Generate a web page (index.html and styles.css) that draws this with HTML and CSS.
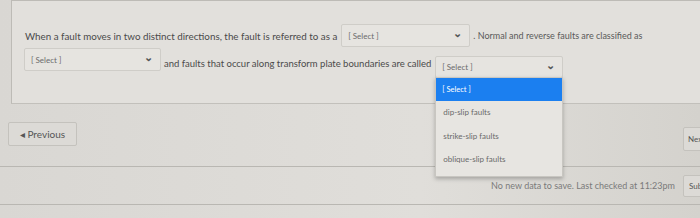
FILE: index.html
```html
<!DOCTYPE html>
<html lang="en">
<head>
    <meta charset="UTF-8">
    <title>Quiz Question</title>
    <link rel="stylesheet" href="styles.css">
</head>
<body>
    <div class="question">
        <div class="row row-one">
            <span>When a fault moves in two distinct directions, the fault is referred to as a</span>
            <div class="select sel-one"><span>[ Select ]</span><span class="caret">&#8964;</span></div>
            <span class="after">. Normal and reverse faults are classified as</span>
        </div>
        <div class="row row-two">
            <div class="select sel-two"><span>[ Select ]</span><span class="caret">&#8964;</span></div>
            <span class="mid">and faults that occur along transform plate boundaries are called</span>
            <div class="drop-wrap">
                <div class="select sel-three"><span>[ Select ]</span><span class="caret">&#8964;</span></div>
                <ul class="options">
                    <li class="active">[ Select ]</li>
                    <li>dip-slip faults</li>
                    <li>strike-slip faults</li>
                    <li>oblique-slip faults</li>
                </ul>
            </div>
        </div>
    </div>

    <div class="nav">
        <button class="btn btn-prev">&#9666; Previous</button>
        <button class="btn btn-next">Next</button>
    </div>

    <div class="footer">
        <span class="status">No new data to save. Last checked at 11:23pm</span>
        <button class="btn btn-submit">Submit</button>
    </div>
</body>
</html>
```

FILE: styles.css
```css
body {
    margin: 0;
    font-family: Lato, "Open Sans", sans-serif;
    font-size: 9.8px;
    color: #4a4a4a;
    background: linear-gradient(90deg, #d9d7d3, #e0deda 60%, #d4d2cd);
    height: 218px;
    overflow: hidden;
}
.question {
    margin-left: 11px;
    height: 104px;
    border-left: 1px solid #bdbbb6;
    border-top: 1px solid #bdbbb6;
    border-bottom: 1px solid #c2c0bb;
    background: #e2e0dc;
    box-sizing: border-box;
    padding: 23px 0 0 13px;
}
.row {
    display: flex;
    white-space: nowrap;
}
.row-one {
    align-items: center;
    height: 23px;
}
.row-one .select {
    margin-left: 4px;
}
.after {
    margin-left: 3px;
    font-size: 9px;
    color: #5a5a5a;
}
.row-two {
    margin-top: 1px;
    margin-left: -1px;
    align-items: flex-start;
}
.select {
    display: flex;
    justify-content: space-between;
    align-items: center;
    box-sizing: border-box;
    height: 23px;
    padding: 0 7px 0 6px;
    border: 1px solid #cfcdc8;
    border-radius: 2px;
    background: #e6e4e0;
    font-size: 8px;
    color: #6b6b6b;
}
.caret {
    font-size: 11px;
    font-weight: bold;
    color: #555;
    line-height: 8px;
    margin-top: -5px;
}
.sel-one { width: 129px; }
.sel-two { width: 137px; }
.sel-three { width: 128px; height: 22px; }
.mid {
    margin: 10px 0 0 3px;
    font-size: 9.5px;
}
.drop-wrap {
    position: relative;
    margin: 8px 0 0 4px;
}
.options {
    position: absolute;
    top: 21px;
    left: 0;
    width: 128px;
    margin: 0;
    padding: 0 0 4px;
    list-style: none;
    background: #e7e5e1;
    border: 1px solid #c8c6c1;
    box-shadow: 0 2px 4px rgba(0,0,0,0.25);
    box-sizing: border-box;
    font-size: 8px;
    color: #6a6a6a;
}
.options li {
    height: 23.5px;
    line-height: 23.5px;
    padding-left: 7px;
}
.options li.active {
    height: 23px;
    line-height: 23px;
    padding-left: 6px;
    background: #1b7ff0;
    color: #fff;
    font-size: 7.5px;
}
.nav {
    display: flex;
    justify-content: space-between;
    align-items: flex-start;
    height: 63px;
    padding: 18px 0 0 8px;
    box-sizing: border-box;
    border-bottom: 1px solid #b9b7b2;
}
.btn {
    font-family: inherit;
    border: 1px solid #c4c2bd;
    border-radius: 2px;
    background: #dcdad6;
    color: #555;
    font-size: 9px;
    height: 24px;
    padding: 0 10px;
}
.btn-prev {
    width: 69px;
    font-size: 10px;
    padding: 0 6px;
}
.btn-next {
    margin-top: 5px;
    width: 40px;
    margin-right: -23px;
    text-align: left;
    padding-left: 4px;
    font-size: 8px;
}
.footer {
    display: flex;
    justify-content: flex-end;
    align-items: center;
    height: 37px;
    border-bottom: 1px solid #b9b7b2;
}
.status {
    font-size: 9px;
    color: #7a7a7a;
    margin-right: 8px;
}
.btn-submit {
    width: 40px;
    height: 22px;
    margin-right: -23px;
    text-align: left;
    padding-left: 5px;
    font-size: 8px;
}
```
